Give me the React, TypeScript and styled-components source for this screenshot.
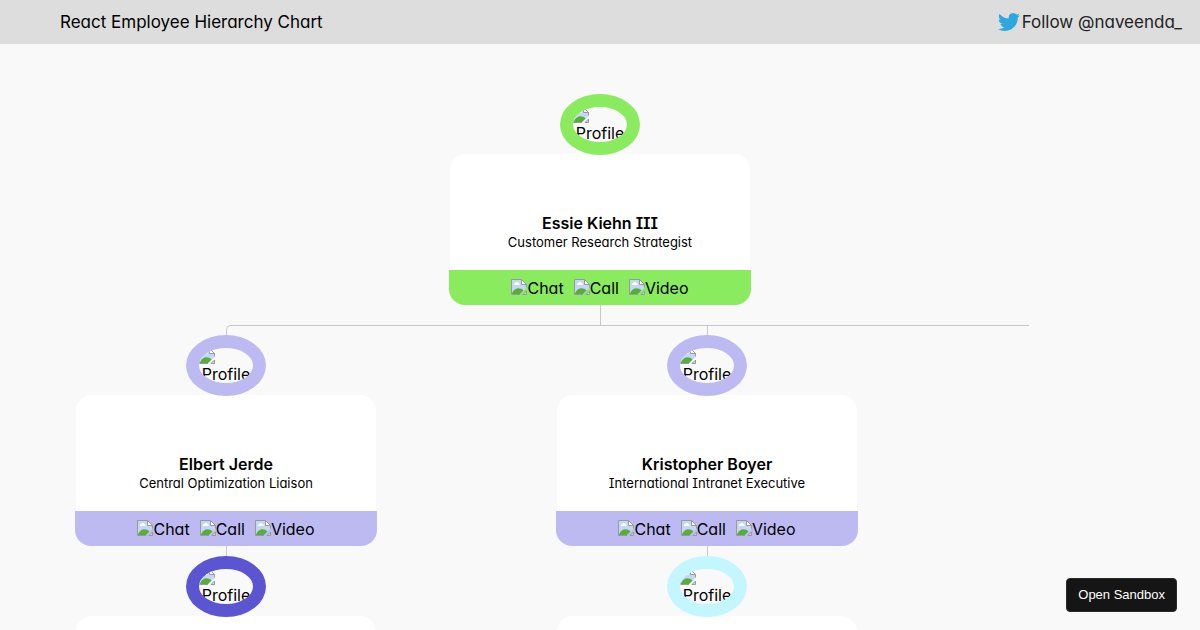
import React from "react";
import styled, { createGlobalStyle } from "styled-components";

const GlobalStyle = createGlobalStyle`
  *, *::before, *::after { box-sizing: border-box; }
  body {
    margin: 0;
    background: #f9f9f9;
    color: #000;
    font-family: Inter, "Liberation Sans", sans-serif;
    font-size: 16px;
    font-feature-settings: "cv11" 1, "cv08" 1;
    line-height: 20px;
  }
`;

const lineColor = "#c8c8c8";

const Page = styled.div`
  height: 100vh;
  overflow: hidden;
`;

const Header = styled.header`
  display: flex;
  align-items: center;
  justify-content: space-between;
  height: 44px;
  padding: 0 18px 0 60px;
  background: #ddd;
  font-size: 17px;
`;

const Title = styled.h1`
  margin: 0;
  font-size: inherit;
  font-weight: 400;
`;

const FollowLink = styled.a`
  display: flex;
  align-items: center;
  gap: 2px;
  color: #222;
  text-decoration: none;
`;

const Chart = styled.main`
  display: flex;
  flex-direction: column;
  align-items: center;
  padding-top: 50px;
`;

const Node = styled.section`
  display: flex;
  flex-direction: column;
  align-items: center;
`;

const Avatar = styled.div<{ $color: string }>`
  position: relative;
  z-index: 1;
  width: 80px;
  height: 61px;
  margin-bottom: -1px;
  border: 13px solid ${(p) => p.$color};
  border-radius: 50%;
  overflow: hidden;
  text-align: center;
  line-height: 20px;
  white-space: nowrap;

  svg { display: block; }
`;

const Card = styled.div`
  width: 300px;
  min-height: 151px;
  padding-top: 59px;
  border-radius: 16px;
  background: #fff;
  text-align: center;
`;

const Name = styled.h2`
  margin: 0;
  font-size: 16px;
  font-weight: 600;
  line-height: 20px;
`;

const Role = styled.p`
  margin: 0;
  font-size: 13px;
  line-height: 18px;
`;

const Actions = styled.div<{ $color: string }>`
  display: flex;
  align-items: center;
  justify-content: center;
  gap: 10px;
  height: 35px;
  margin: 19px -1px 0;
  border-radius: 0 0 16px 16px;
  background: ${(p) => p.$color};
`;

const Action = styled.span`
  display: flex;
  align-items: flex-start;
  line-height: 18px;
`;

const Stem = styled.div<{ $height: number }>`
  width: 1px;
  height: ${(p) => p.$height}px;
  margin-left: 1px;
  background: ${lineColor};
`;

const Branches = styled.div`
  display: grid;
  grid-template-columns: 452fr 510fr 238fr;
  width: 100%;
`;

const Branch = styled.div`
  display: flex;
  flex-direction: column;
  align-items: center;
`;

const Elbow = styled.div`
  align-self: flex-end;
  width: 50%;
  height: 10px;
  border: solid ${lineColor};
  border-width: 1px 0 0 1px;
  border-top-left-radius: 5px;
`;

const Tee = styled.div`
  display: flex;
  justify-content: center;
  width: 100%;
  height: 10px;
  border-top: 1px solid ${lineColor};
`;

const Tail = styled.div`
  align-self: flex-start;
  width: 28%;
  height: 10px;
  border-top: 1px solid ${lineColor};
`;

const SandboxButton = styled.button`
  position: fixed;
  right: 23px;
  bottom: 18px;
  z-index: 2;
  height: 34px;
  padding: 0 11px;
  border: 1px solid #2a2a2a;
  border-radius: 4px;
  background: #151515;
  color: #fff;
  font: 13px/20px "Liberation Sans", Arial, sans-serif;
`;

const ImageIcon = () => (
  <svg width="16" height="16" viewBox="0 0 16 16" aria-hidden="true">
    <path d="M.5 .5h10l5 5v3.500L9 15.500H.5z" fill="#c5d7f6" />
    <path d="M3 6a1.500 1.500 0 0 1 1.200-2 1.800 1.800 0 0 1 3.300 0A1.400 1.400 0 0 1 8.500 6z" fill="#fff" />
    <path d="M1 14.500C3.500 8.500 9 8 12.500 11.500L9 15H1z" fill="#57ad3a" />
    <path d="M12 15.500h3.500V12z" fill="#c5d7f6" stroke="#999" />
    <path d="M15.500 8.500v-3l-5-5H.5v15H9" fill="none" stroke="#999" />
    <path d="M10.500 .5v5h5z" fill="#fff" stroke="#999" />
  </svg>
);

const TwitterIcon = () => (
  <svg width="22" height="22" viewBox="0 0 24 24" fill="#2ca7e0" aria-hidden="true">
    <path d="M23.953 4.570a10 10 0 0 1-2.825.775 4.958 4.958 0 0 0 2.163-2.723c-.951.555-2.005.959-3.127 1.184a4.920 4.920 0 0 0-8.384 4.482C7.690 8.095 4.067 6.130 1.640 3.162a4.822 4.822 0 0 0-.666 2.475c0 1.710.870 3.213 2.188 4.096a4.904 4.904 0 0 1-2.228-.616v.060a4.923 4.923 0 0 0 3.946 4.827 4.996 4.996 0 0 1-2.212.085 4.936 4.936 0 0 0 4.604 3.417 9.867 9.867 0 0 1-6.102 2.105c-.390 0-.779-.023-1.170-.067a13.995 13.995 0 0 0 7.557 2.209c9.053 0 13.998-7.496 13.998-13.985 0-.210 0-.420-.015-.630a9.935 9.935 0 0 0 2.460-2.548z" />
  </svg>
);

function Profile({ color }: { color: string }) {
  return (
    <Avatar $color={color}>
      <ImageIcon />
      Profile
    </Avatar>
  );
}

function Employee({ name, role, color }: { name: string; role: string; color: string }) {
  return (
    <Node>
      <Profile color={color} />
      <Card>
        <Name>{name}</Name>
        <Role>{role}</Role>
        <Actions $color={color}>
          {["Chat", "Call", "Video"].map((label) => (
            <Action key={label}>
              <ImageIcon />
              {label}
            </Action>
          ))}
        </Actions>
      </Card>
    </Node>
  );
}

function Report({ color }: { color: string }) {
  return (
    <Node>
      <Stem $height={10} />
      <Profile color={color} />
      <Card />
    </Node>
  );
}

export default function App() {
  return (
    <Page>
      <GlobalStyle />
      <Header>
        <Title>React Employee Hierarchy Chart</Title>
        <FollowLink href="#follow">
          <TwitterIcon />
          Follow @naveenda_
        </FollowLink>
      </Header>
      <Chart>
        <Employee name="Essie Kiehn III" role="Customer Research Strategist" color="#8aeb5e" />
        <Stem $height={20} />
        <Branches>
          <Branch>
            <Elbow />
            <Employee name="Elbert Jerde" role="Central Optimization Liaison" color="#bdbaf2" />
            <Report color="#5b55d2" />
          </Branch>
          <Branch>
            <Tee>
              <Stem $height={9} />
            </Tee>
            <Employee name="Kristopher Boyer" role="International Intranet Executive" color="#bdbaf2" />
            <Report color="#c4f6ff" />
          </Branch>
          <Branch>
            <Tail />
          </Branch>
        </Branches>
      </Chart>
      <SandboxButton type="button">Open Sandbox</SandboxButton>
    </Page>
  );
}
